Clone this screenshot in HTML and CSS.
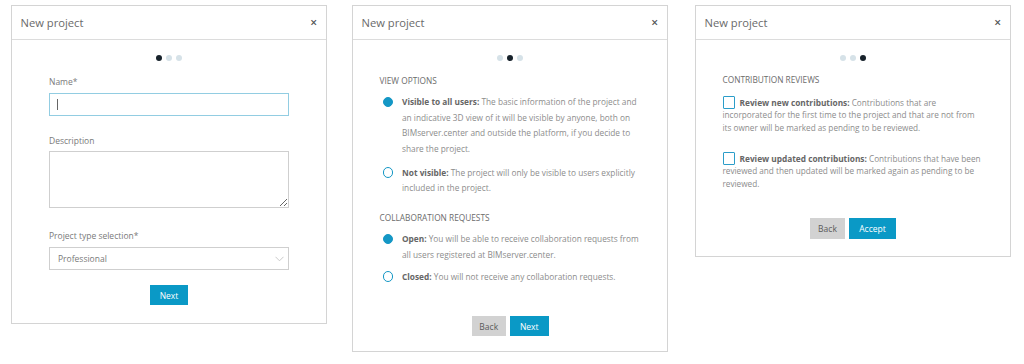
FILE: index.html
```html
<!DOCTYPE html>
<html>
<head>
<meta charset="utf-8">
<link rel="stylesheet" href="styles.css">
</head>
<body>
<div class="row">
  <div class="modal m1">
    <div class="hdr"><span class="title">New project</span><span class="close">×</span></div>
    <div class="body b1">
      <div class="dots"><span class="dot on"></span><span class="dot"></span><span class="dot"></span></div>
      <div class="lbl">Name*</div>
      <div class="input focus"><span class="caret"></span></div>
      <div class="lbl l2">Description</div>
      <textarea class="area"></textarea>
      <div class="lbl l3">Project type selection*</div>
      <div class="input select"><span>Professional</span>
        <svg class="chev" width="9" height="6" viewBox="0 0 9 6"><path d="M0.5 0.8 L4.5 4.8 L8.5 0.8" fill="none" stroke="#c4c4c4" stroke-width="0.9"/></svg>
      </div>
      <div class="btns b1btns"><span class="btn blue w38">Next</span></div>
    </div>
  </div>

  <div class="modal m2">
    <div class="hdr"><span class="title">New project</span><span class="close">×</span></div>
    <div class="body b2">
      <div class="dots"><span class="dot"></span><span class="dot on"></span><span class="dot"></span></div>
      <div class="sec">VIEW OPTIONS</div>
      <div class="opt"><span class="radio filled"></span><p><b>Visible to all users:</b> The basic information of the project and an indicative 3D view of it will be visible by anyone, both on BIMserver.center and outside the platform, if you decide to share the project.</p></div>
      <div class="opt o2"><span class="radio"></span><p><b>Not visible:</b> The project will only be visible to users explicitly included in the project.</p></div>
      <div class="sec s2">COLLABORATION REQUESTS</div>
      <div class="opt"><span class="radio filled"></span><p><b>Open:</b> You will be able to receive collaboration requests from all users registered at BIMserver.center.</p></div>
      <div class="opt o3"><span class="radio"></span><p><b>Closed:</b> You will not receive any collaboration requests.</p></div>
      <div class="btns b2btns"><span class="btn gray w34">Back</span><span class="btn blue w39">Next</span></div>
    </div>
  </div>

  <div class="modal m3">
    <div class="hdr"><span class="title">New project</span><span class="close">×</span></div>
    <div class="body b3">
      <div class="dots"><span class="dot"></span><span class="dot"></span><span class="dot on"></span></div>
      <div class="sec">CONTRIBUTION REVIEWS</div>
      <p class="chk"><span class="box"></span><b>Review new contributions:</b> Contributions that are<br>incorporated for the first time to the project and that are not from<br>its owner will be marked as pending to be reviewed.</p>
      <p class="chk c2"><span class="box"></span><b>Review updated contributions:</b> Contributions that have been<br>reviewed and then updated will be marked again as pending to be<br>reviewed.</p>
      <div class="btns b3btns"><span class="btn gray w35">Back</span><span class="btn blue w47">Accept</span></div>
    </div>
  </div>
</div>
</body>
</html>
```

FILE: styles.css
```css
* { box-sizing: border-box; }
html, body { margin: 0; padding: 0; background: #fff; }
body { font-family: "Open Sans", "Liberation Sans", sans-serif; font-size: 8.3px; color: #8c8c8c; }
.row { display: flex; align-items: flex-start; padding: 5px 0 0 11px; }
.modal { width: 316px; border: 1.5px solid #d4d4d4; background: #fff; }
.m2 { margin-left: 25px; }
.m3 { margin-left: 27px; }
.hdr { height: 34px; border-bottom: 1px solid #dcdcdc; display: flex; align-items: center; justify-content: space-between; padding: 0 9px 0 8.5px; }
.title { font-size: 11.2px; color: #6a6a6a; }
.close { font-size: 12px; color: #555; font-weight: 600; }
.body { padding: 15px 37px 17.5px 37px; }
.dots { display: flex; justify-content: center; gap: 4px; height: 6px; }
.dot { width: 6px; height: 6px; border-radius: 50%; background: #d6e2e8; }
.dot.on { background: #17222b; }
.lbl { margin-top: 16px; line-height: 10px; color: #7a7a7a; font-size: 8.5px; }
.l2 { margin-top: 20px; }
.l3 { margin-top: 23px; }
.input { margin-top: 6px; height: 23px; border: 1px solid #cfcfcf; display: flex; align-items: center; padding: 0 7px; }
.input.focus { border: 1.5px solid #92cde2; }
.caret { width: 1px; height: 11px; background: #666; }
.area { display: block; margin-top: 5px; width: 100%; height: 57px; border: 1px solid #cfcfcf; resize: vertical; font: inherit; }
.select { color: #7a7a7a; justify-content: space-between; padding: 0 4px 0 8px; font-size: 8.5px; }
.btns { display: flex; justify-content: center; gap: 4px; }
.b1btns { margin-top: 15px; }
.btn { height: 20px; display: flex; align-items: center; justify-content: center; font-size: 8.5px; }
.blue { background: #0a99c6; color: #fff; }
.gray { background: #d2d2d2; color: #5a5a5a; }
.w38 { width: 38px; }
.w34 { width: 34px; }
.w39 { width: 39px; }
.w35 { width: 35px; height: 21px; }
.w47 { width: 47px; height: 21px; }
.b2 { padding: 15px 26px 15px 26.5px; }
.sec { margin-top: 15px; line-height: 10px; color: #6c6c6c; font-size: 8.3px; }
.b3 .sec { margin-top: 14px; }
.s2 { margin-top: 17px; }
.opt { display: flex; align-items: flex-start; margin-top: 8px; }
.o2 { margin-top: 8.5px; }
.o3 { margin-top: 6.5px; }
.opt p { margin: 0; line-height: 15.6px; flex: 1; }
.opt b, .chk b { color: #666; font-weight: 700; }
.chk b { font-size: 8.3px; }
.radio { flex: none; width: 10.5px; height: 10.5px; border-radius: 50%; border: 1.7px solid #1497c5; margin: 2.5px 9px 0 3px; }
.radio.filled { background: #1497c5; }
.b2btns { margin-top: 32px; }
.b3 { padding: 15px 26.5px 17px 26.5px; }
.chk { margin: 11px 0 0 0; line-height: 12.5px; font-size: 8.2px; white-space: nowrap; }
.c2 { margin-top: 18px; }
.box { display: inline-block; vertical-align: -3px; width: 12.5px; height: 12.5px; border: 1.5px solid #2b9dc9; border-radius: 1px; margin-right: 4.5px; }
.b3btns { margin-top: 28px; }
```
